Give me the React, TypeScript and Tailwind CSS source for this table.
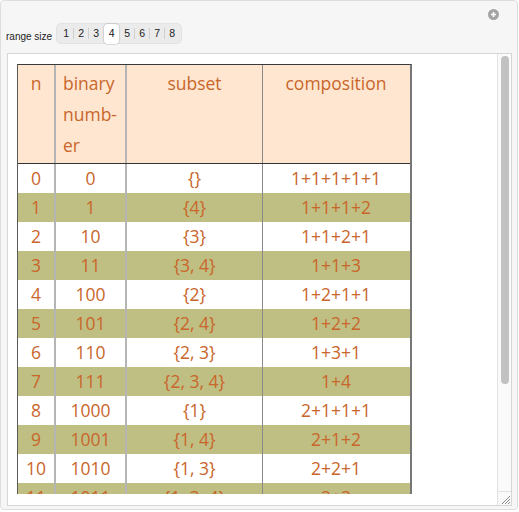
import React from "react";

const rows: [string, string, string, string][] = [
  ["0", "0", "{}", "1+1+1+1+1"],
  ["1", "1", "{4}", "1+1+1+2"],
  ["2", "10", "{3}", "1+1+2+1"],
  ["3", "11", "{3, 4}", "1+1+3"],
  ["4", "100", "{2}", "1+2+1+1"],
  ["5", "101", "{2, 4}", "1+2+2"],
  ["6", "110", "{2, 3}", "1+3+1"],
  ["7", "111", "{2, 3, 4}", "1+4"],
  ["8", "1000", "{1}", "2+1+1+1"],
  ["9", "1001", "{1, 4}", "2+1+2"],
  ["10", "1010", "{1, 3}", "2+2+1"],
  ["11", "1011", "{1, 3, 4}", "2+3"],
  ["12", "1100", "{1, 2}", "3+1+1"],
];

export default function App() {
  return (
    <div className="w-[519px] h-[512px] bg-white relative" style={{ fontFamily: "'Open Sans', sans-serif" }}>
      <div className="w-[518px] h-[510px] bg-[#f6f6f6] border border-[#dedede] rounded-[4px] flex flex-col relative">
        {/* plus icon */}
        <div className="absolute left-[487px] top-[8px] w-[11px] h-[11px] rounded-full bg-[#a4a4a4] flex items-center justify-center">
          <svg width="7" height="7" viewBox="0 0 7 7">
            <path d="M3.5 1v5M1 3.5h5" stroke="white" strokeWidth="1.6" />
          </svg>
        </div>
        <div className="h-[52px] flex items-end pb-[9px] pl-[5px]">
          <span className="text-[10px] text-[#222] mr-[4px]" style={{ fontFamily: "'Liberation Sans', sans-serif" }}>range size</span>
          <div className="h-[21px] bg-[#ebebeb] rounded-[5px] flex items-center px-[2px] border border-[#e3e3e3]" style={{ fontFamily: "'Liberation Sans', sans-serif" }}>
            {["1", "2", "3", "4", "5", "6", "7", "8"].map((n, i) => (
              <div key={n} className="flex items-center">
                {i > 0 && i !== 3 && i !== 4 && <div className="w-px h-[11px] bg-[#cfcfcf]" />}
                {n === "4" ? (
                  <div className="w-[15px] h-[20px] bg-white rounded-[4px] shadow-[0_0_1px_1px_rgba(0,0,0,0.12)] flex items-center justify-center text-[10.5px] text-[#111] mx-[1px]">{n}</div>
                ) : (
                  <div className="w-[14px] h-[18px] flex items-center justify-center text-[10.5px] text-[#222]">{n}</div>
                )}
              </div>
            ))}
          </div>
        </div>
        <div className="ml-[6px] w-[505px] h-[453px] bg-white border border-[#d6d6d6] flex">
          <div className="flex-1 pl-[9px] pt-[10px] overflow-hidden">
            <div className="h-[430px] overflow-hidden">
              <div className="w-[395px] border-t border-l border-r-2 border-t-[#3a3a3a] border-l-[#5a5a5a] border-r-[#777] text-[#c9662b] text-[17.5px]">
                <div className="flex bg-[#ffe6d0] h-[99px] border-b border-[#333]">
                  <div className="w-[38px] border-r-2 border-[#b5b5b5] text-center leading-[31px] pt-[3px]">n</div>
                  <div className="w-[71px] border-r-2 border-[#b5b5b5] leading-[31px] pt-[3px] pl-[7px]">binary<br />numb-<br />er</div>
                  <div className="w-[136px] border-r border-[#8a8a8a] text-center leading-[31px] pt-[3px]">subset</div>
                  <div className="w-[146px] text-center leading-[31px] pt-[3px]">composition</div>
                </div>
                {rows.map((r, i) => (
                  <div key={i} className={`flex h-[29px] items-center ${i % 2 === 1 ? "bg-[#bfbf83]" : "bg-white"}`}>
                    <div className="w-[38px] h-full border-r-2 border-[#b5b5b5] flex items-center justify-center">{r[0]}</div>
                    <div className="w-[71px] h-full border-r-2 border-[#b5b5b5] flex items-center justify-center">{r[1]}</div>
                    <div className="w-[136px] h-full border-r border-[#8a8a8a] flex items-center justify-center">{r[2]}</div>
                    <div className="w-[146px] h-full flex items-center justify-center">{r[3]}</div>
                  </div>
                ))}
              </div>
            </div>
          </div>
          <div className="w-[14px] h-full border-l border-[#e2e2e2] bg-[#fafafa] flex flex-col items-center">
            <div className="mt-[2px] w-[8px] h-[328px] rounded-full bg-[#c2c2c2]" />
            <div className="flex-1" />
            <div className="w-full h-[14px] border-t border-[#e2e2e2] flex items-end justify-end">
              <svg width="12" height="12" viewBox="0 0 12 12">
                <path d="M11 3L3 11M11 6L6 11M11 9L9 11" stroke="#8a8a8a" strokeWidth="1" />
              </svg>
            </div>
          </div>
        </div>
      </div>
    </div>
  );
}
